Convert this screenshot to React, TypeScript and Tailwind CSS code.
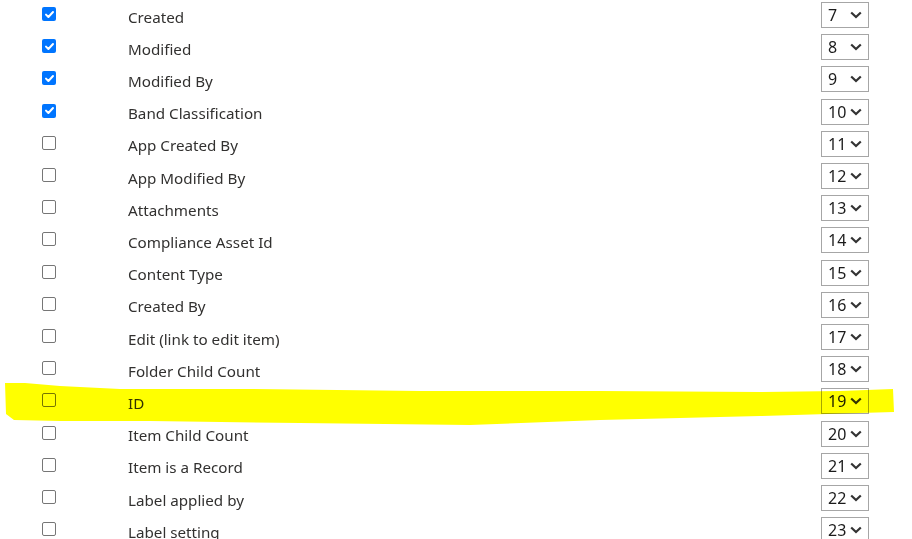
import React from "react";

const rows: { label: string; checked: boolean; pos: number }[] = [
  { label: "Created", checked: true, pos: 7 },
  { label: "Modified", checked: true, pos: 8 },
  { label: "Modified By", checked: true, pos: 9 },
  { label: "Band Classification", checked: true, pos: 10 },
  { label: "App Created By", checked: false, pos: 11 },
  { label: "App Modified By", checked: false, pos: 12 },
  { label: "Attachments", checked: false, pos: 13 },
  { label: "Compliance Asset Id", checked: false, pos: 14 },
  { label: "Content Type", checked: false, pos: 15 },
  { label: "Created By", checked: false, pos: 16 },
  { label: "Edit (link to edit item)", checked: false, pos: 17 },
  { label: "Folder Child Count", checked: false, pos: 18 },
  { label: "ID", checked: false, pos: 19 },
  { label: "Item Child Count", checked: false, pos: 20 },
  { label: "Item is a Record", checked: false, pos: 21 },
  { label: "Label applied by", checked: false, pos: 22 },
  { label: "Label setting", checked: false, pos: 23 },
];

function Check({ checked }: { checked: boolean }) {
  if (checked) {
    return (
      <span className="flex h-[14px] w-[14px] items-center justify-center rounded-[2px] bg-[#0075ff]">
        <svg width="11" height="11" viewBox="0 0 11 11">
          <path d="M2 5.6 L4.4 8 L9 3" fill="none" stroke="#fff" strokeWidth="2" strokeLinecap="round" strokeLinejoin="round" />
        </svg>
      </span>
    );
  }
  return <span className="block h-[14px] w-[14px] rounded-[2px] border border-[#767676] bg-white" />;
}

function Sel({ value }: { value: number }) {
  return (
    <div className="flex h-[26px] w-[48px] items-center border border-[#a6a6a6] pl-[6px] text-[16px] text-[#1b1b1b]">
      <span className="w-[22px]">{value}</span>
      <svg width="12" height="8" viewBox="0 0 12 8">
        <path d="M1.2 1.5 L6 6 L10.8 1.5" fill="none" stroke="#333" strokeWidth="2.2" />
      </svg>
    </div>
  );
}

export default function App() {
  return (
    <div
      className="relative h-[539px] w-[912px] overflow-hidden bg-white"
      style={{ fontFamily: '"Noto Sans", "Open Sans", sans-serif' }}
    >
      <div className="mt-[-1px] flex flex-col">
        {rows.map((r) => (
          <div key={r.label} className="flex h-[32.2px] items-center">
            <div className="ml-[42px] w-[86px]">
              <div className="mb-[2px]">
                <Check checked={r.checked} />
              </div>
            </div>
            <div className="mt-[4px] flex-1 text-[15.2px] text-[#323130]">{r.label}</div>
            <div className="mr-[43px]">
              <Sel value={r.pos} />
            </div>
          </div>
        ))}
      </div>
      <svg
        className="pointer-events-none absolute left-0 top-0 mix-blend-multiply"
        width="912"
        height="539"
        viewBox="0 0 912 539"
      >
        <path
          d="M5 383 L25 383 L60 386 L120 389 L250 389 L420 391 L600 391 L760 392 L840 391 L893 389 L894 412 L860 413 L760 416 L600 420 L470 425 L300 423 L150 421 L60 421 L14 420 L6 414 Z"
          fill="#ffff00"
        />
      </svg>
    </div>
  );
}
